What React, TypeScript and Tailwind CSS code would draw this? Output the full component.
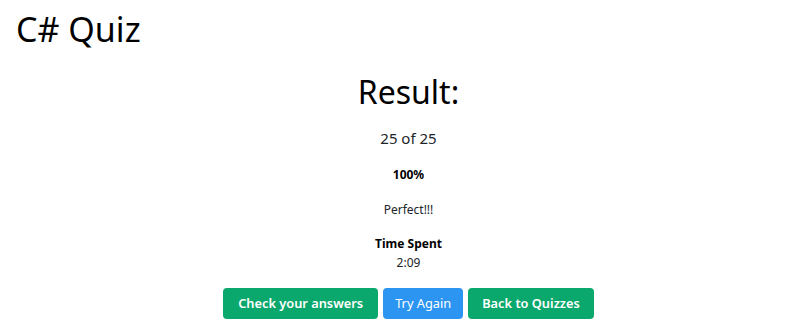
export default function App() {
  const font = { fontFamily: '"Noto Sans", "Open Sans", sans-serif' };
  return (
    <div className="w-[800px] h-[336px] bg-white text-[#212529] overflow-hidden" style={font}>
      <h1 className="pl-[16px] pt-[9px] text-[34px] leading-[41px] font-normal text-black">C# Quiz</h1>
      <div className="flex flex-col items-center mt-[20px] pl-[17px]">
        <div className="text-[32px] leading-[44px] text-black">Result:</div>
        <div className="mt-[12px] text-[15px] leading-[24px]">25 of 25</div>
        <div className="mt-[15px] text-[12px] leading-[20px] font-bold text-black">100%</div>
        <div className="mt-[15px] text-[12px] leading-[20px]">Perfect!!!</div>
        <div className="mt-[14px] text-[12px] leading-[19px] font-bold text-black">Time Spent</div>
        <div className="text-[12px] leading-[19px]">2:09</div>
        <div className="mt-[16px] flex gap-[5px]">
          <button className="h-[31px] px-[15px] rounded-[4px] bg-[#0aa86c] text-white text-[12.8px] font-semibold">Check your answers</button>
          <button className="h-[31px] px-[12px] rounded-[4px] bg-[#2c95f1] text-white text-[12.8px]">Try Again</button>
          <button className="h-[31px] px-[14px] rounded-[4px] bg-[#0aa86c] text-white text-[12.8px] font-semibold">Back to Quizzes</button>
        </div>
      </div>
    </div>
  );
}
